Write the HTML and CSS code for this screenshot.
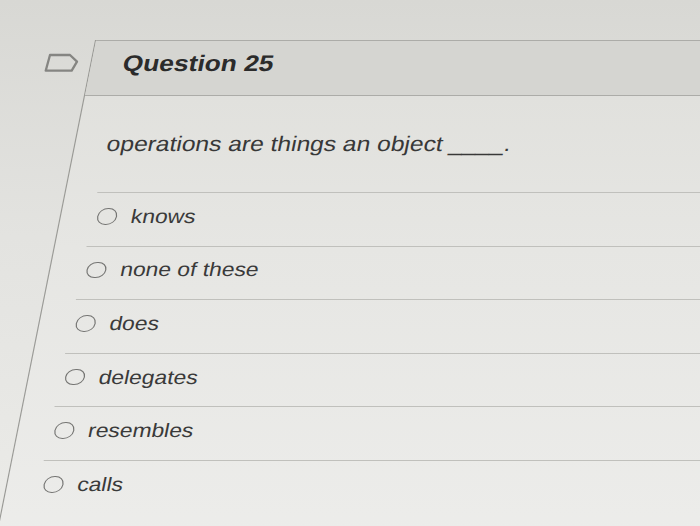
FILE: index.html
```html
<!DOCTYPE html>
<html lang="en">
<head>
<meta charset="utf-8">
<title>Question 25</title>
<link rel="stylesheet" href="styles.css">
</head>
<body>
<div class="page">
  <div class="gutter">
    <svg class="flag" width="36" height="22" viewBox="0 0 36 22" aria-hidden="true"><path d="M6 3H26L33 9.7L27.7 18.7H1.7Z" fill="none" stroke="#858582" stroke-width="2.3" stroke-linejoin="round"/></svg>
  </div>
  <section class="card">
    <header class="card-head"><h2 class="title">Question 25</h2></header>
    <p class="prompt">operations are things an object ____.</p>
    <ul class="answers">
      <li class="answer"><span class="radio"></span><span class="label">knows</span></li>
      <li class="answer"><span class="radio"></span><span class="label">none of these</span></li>
      <li class="answer"><span class="radio"></span><span class="label">does</span></li>
      <li class="answer"><span class="radio"></span><span class="label">delegates</span></li>
      <li class="answer"><span class="radio"></span><span class="label">resembles</span></li>
      <li class="answer"><span class="radio"></span><span class="label">calls</span></li>
    </ul>
  </section>
</div>
</body>
</html>
```

FILE: styles.css
```css
html, body {
  margin: 0;
  height: 100%;
  overflow: hidden;
}

body {
  background: linear-gradient(#d8d8d4, #e3e3e0 45%, #ebebe8);
  font-family: "Liberation Sans", Arial, sans-serif;
}

.page {
  display: flex;
  padding-top: 40px;
  height: 526px;
  box-sizing: border-box;
}

.gutter {
  flex: 0 0 95px;
}

.flag {
  display: block;
  margin: 12px 0 0 44px;
}

.card {
  flex: 0 0 640px;
  min-height: 520px;
  transform-origin: 0 0;
  transform: skewX(-11.3deg) scaleX(1.17);
  border-left: 1px solid #9a9a96;
  background: linear-gradient(#dfdfdb, #e6e6e3 40%, #ededeb);
}

.card-head {
  height: 56px;
  box-sizing: border-box;
  border-top: 1px solid #acaca8;
  border-bottom: 1px solid #acaca8;
  background: #d5d5d1;
  padding: 10px 0 0 27px;
}

.title {
  margin: 0;
  font-size: 22.5px;
  line-height: 26px;
  font-weight: 700;
  color: #2b2b2b;
}

.prompt {
  margin: 0;
  padding: 36px 0 36px 27px;
  font-size: 21px;
  line-height: 24px;
  color: #383838;
}

.answers {
  list-style: none;
  margin: 0;
  padding: 0 0 0 27px;
}

.answer {
  display: flex;
  align-items: center;
  height: 53.6px;
  box-sizing: border-box;
  border-top: 1px solid #c0c0bc;
  padding: 0 0 6px 4px;
}

.radio {
  flex: none;
  width: 16.5px;
  height: 16.5px;
  box-sizing: border-box;
  border: 1.8px solid #757573;
  border-radius: 50%;
}

.label {
  margin-left: 12.5px;
  font-size: 19.5px;
  color: #3a3a3a;
}
```
